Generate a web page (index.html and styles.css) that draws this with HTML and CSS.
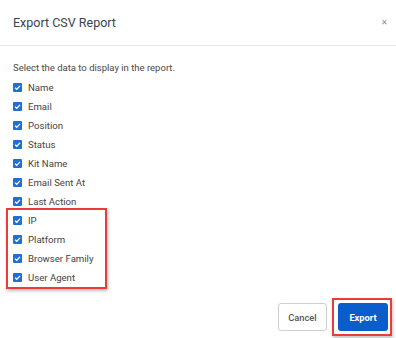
FILE: index.html
```html
<!DOCTYPE html>
<html>
<head>
<meta charset="utf-8">
<link rel="stylesheet" href="styles.css">
</head>
<body>
<div class="modal">
  <div class="header">
    <span class="title">Export CSV Report</span>
    <span class="close">&#x2715;</span>
  </div>
  <div class="content">
    <p class="intro">Select the data to display in the report.</p>
    <div class="list">
      <label class="row"><span class="cb"><svg viewBox="0 0 10 10"><path d="M2.3 5.2 L4.2 7 L7.8 3.2" /></svg></span>Name</label>
      <label class="row"><span class="cb"><svg viewBox="0 0 10 10"><path d="M2.3 5.2 L4.2 7 L7.8 3.2" /></svg></span>Email</label>
      <label class="row"><span class="cb"><svg viewBox="0 0 10 10"><path d="M2.3 5.2 L4.2 7 L7.8 3.2" /></svg></span>Position</label>
      <label class="row"><span class="cb"><svg viewBox="0 0 10 10"><path d="M2.3 5.2 L4.2 7 L7.8 3.2" /></svg></span>Status</label>
      <label class="row"><span class="cb"><svg viewBox="0 0 10 10"><path d="M2.3 5.2 L4.2 7 L7.8 3.2" /></svg></span>Kit Name</label>
      <label class="row"><span class="cb"><svg viewBox="0 0 10 10"><path d="M2.3 5.2 L4.2 7 L7.8 3.2" /></svg></span>Email Sent At</label>
      <label class="row"><span class="cb"><svg viewBox="0 0 10 10"><path d="M2.3 5.2 L4.2 7 L7.8 3.2" /></svg></span>Last Action</label>
      <div class="highlight">
        <label class="row"><span class="cb"><svg viewBox="0 0 10 10"><path d="M2.3 5.2 L4.2 7 L7.8 3.2" /></svg></span>IP</label>
        <label class="row"><span class="cb"><svg viewBox="0 0 10 10"><path d="M2.3 5.2 L4.2 7 L7.8 3.2" /></svg></span>Platform</label>
        <label class="row"><span class="cb"><svg viewBox="0 0 10 10"><path d="M2.3 5.2 L4.2 7 L7.8 3.2" /></svg></span>Browser Family</label>
        <label class="row"><span class="cb"><svg viewBox="0 0 10 10"><path d="M2.3 5.2 L4.2 7 L7.8 3.2" /></svg></span>User Agent</label>
      </div>
    </div>
  </div>
  <div class="footer">
    <button class="btn cancel">Cancel</button>
    <div class="btn-highlight">
      <button class="btn export">Export</button>
    </div>
  </div>
</div>
</body>
</html>
```
FILE: styles.css
```css
* { box-sizing: border-box; }
html, body {
  margin: 0;
  padding: 0;
  background: #ffffff;
}
body {
  font-family: Roboto, "Liberation Sans", Arial, sans-serif;
  width: 396px;
  height: 338px;
  overflow: hidden;
}
.modal {
  width: 396px;
  height: 338px;
  display: flex;
  flex-direction: column;
}
.header {
  height: 46px;
  border-bottom: 1px solid #e6e6e6;
  display: flex;
  align-items: center;
  justify-content: space-between;
  padding: 0 8px 0 13px;
}
.title {
  font-size: 12.5px;
  color: #3a4450;
}
.close {
  font-size: 8px;
  color: #8f8f8f;
}
.content {
  padding: 0 0 0 13px;
}
.intro {
  margin: 15px 0 3px 0;
  font-size: 9.5px;
  line-height: 14px;
  color: #4a4a4a;
}
.list {
  display: flex;
  flex-direction: column;
}
.row {
  height: 19px;
  display: flex;
  align-items: center;
  gap: 6px;
  font-size: 9.6px;
  color: #444;
  white-space: nowrap;
}
.cb {
  width: 9px;
  height: 9px;
  background: #1f6fd6;
  border-radius: 1px;
  display: flex;
  flex: none;
}
.cb svg {
  width: 9px;
  height: 9px;
  fill: none;
  stroke: #ffffff;
  stroke-width: 1.4;
}
.highlight {
  width: 101px;
  margin: -3px 0 -2px -7px;
  padding: 1px 0 0 5px;
  border: 2px solid #ec3b3b;
  box-shadow: 1px 2px 3px rgba(0, 0, 0, 0.25);
}
.footer {
  margin-top: auto;
  margin-bottom: 2px;
  display: flex;
  justify-content: flex-end;
  align-items: center;
  padding-right: 4px;
}
.btn {
  font-family: Roboto, "Liberation Sans", Arial, sans-serif;
  font-size: 9.3px;
  height: 28px;
  border-radius: 3px;
  cursor: pointer;
}
.cancel {
  width: 49px;
  background: #fff;
  border: 1px solid #cfcfcf;
  color: #555;
  font-weight: 500;
  margin-right: 5px;
}
.btn-highlight {
  border: 2px solid #ec3b3b;
  padding: 3px 2px 3px 4px;
  box-shadow: 1px 2px 3px rgba(0, 0, 0, 0.25);
  display: flex;
}
.export {
  width: 50px;
  background: #0b5dcc;
  border: none;
  color: #fff;
  font-weight: 700;
}
```
